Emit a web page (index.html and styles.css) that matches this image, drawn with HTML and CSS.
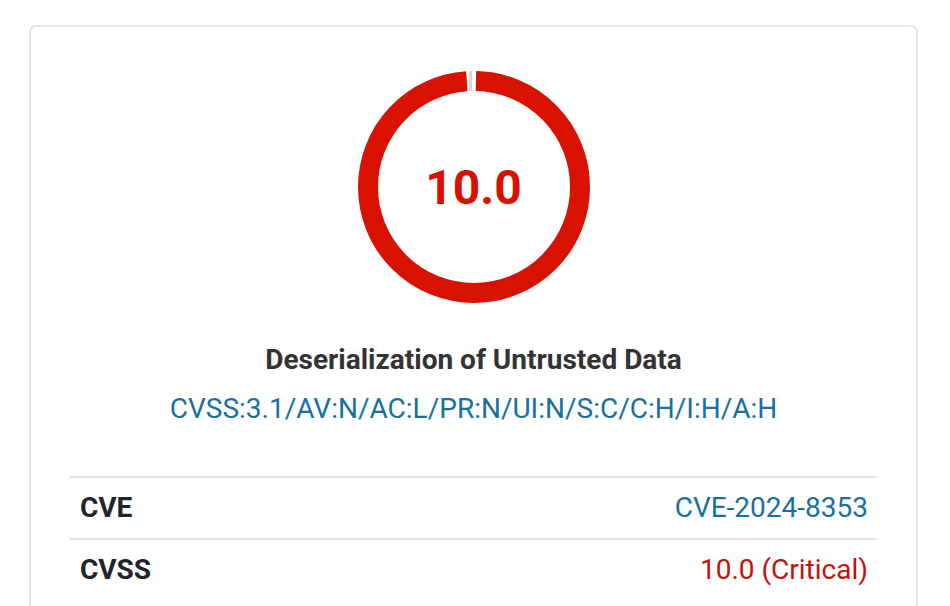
FILE: index.html
```html
<!DOCTYPE html>
<html>
<head>
<meta charset="utf-8">
<link rel="stylesheet" href="styles.css">
</head>
<body>
<div class="card">
  <div class="gauge">
    <svg class="ring" width="232" height="232" viewBox="0 0 232 232">
      <circle cx="116" cy="116" r="106" fill="none" stroke="#d91100" stroke-width="20"
        stroke-dasharray="656 10" stroke-dashoffset="-2" transform="rotate(-90 116 116)"/>
      <rect x="111" y="0" width="3" height="20" fill="#d4d6dc"/>
    </svg>
    <div class="score">10.0</div>
  </div>
  <h2 class="title">Deserialization of Untrusted Data</h2>
  <a class="vector" href="#">CVSS:3.1/AV:N/AC:L/PR:N/UI:N/S:C/C:H/I:H/A:H</a>
  <table class="info">
    <tr><th>CVE</th><td><a class="link" href="#">CVE-2024-8353</a></td></tr>
    <tr><th>CVSS</th><td class="crit">10.0 (Critical)</td></tr>
  </table>
</div>
</body>
</html>
```
FILE: styles.css
```css
html, body { margin: 0; padding: 0; background: #fff; }
body { font-family: Roboto, "Liberation Sans", sans-serif; color: #212529; }
.card {
  margin: 25px 0 0 29px;
  border: 2px solid #e6e6e6;
  border-radius: 7px;
  padding: 44px 39px 0;
  box-sizing: content-box;
  width: 807px;
  height: 600px;
}
.gauge { position: relative; width: 232px; height: 232px; margin: 0 auto; }
.ring { display: block; }
.score {
  position: absolute; inset: 0;
  display: flex; align-items: center; justify-content: center;
  font-size: 48px; font-weight: 700; color: #d91100;
}
.title {
  margin: 40px 0 0; text-align: center;
  font-size: 28px; line-height: 34px; font-weight: 700; color: #333;
}
.vector {
  display: block; text-align: center; margin-top: 15px;
  font-size: 28px; line-height: 34px; color: #17709f; text-decoration: none;
}
.info { width: 100%; border-collapse: collapse; margin-top: 50px; }
.info th, .info td {
  border-top: 2px solid #e3e3e3; height: 60px; padding: 0 10px;
  font-size: 28px; line-height: 34px;
}
.info th { text-align: left; font-weight: 700; color: #212529; }
.info td { text-align: right; padding-right: 9px; }
.link { color: #17709f; text-decoration: none; }
.crit { color: #c8100a; }
```
